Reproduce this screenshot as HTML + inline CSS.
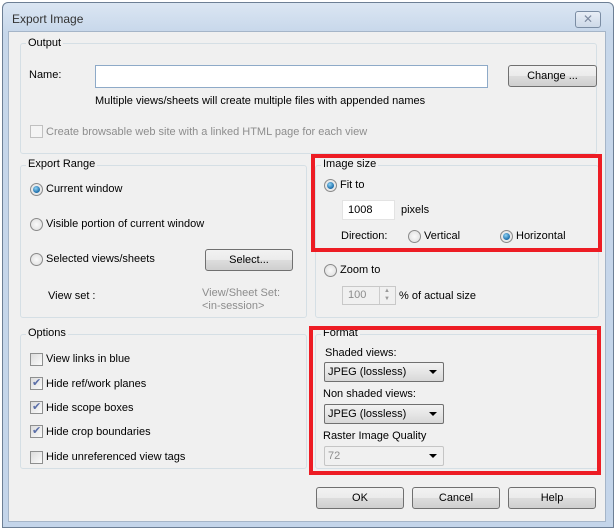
<!DOCTYPE html>
<html><head><meta charset="utf-8"><style>
*{box-sizing:border-box;margin:0;padding:0}
body{width:614px;height:528px;background:#fff;position:relative;overflow:hidden;font-family:"Liberation Sans",sans-serif;font-size:11px;color:#000}
.a{position:absolute;white-space:nowrap}
.win{position:absolute;left:2px;top:2px;width:612px;height:526px;background:linear-gradient(#dbe6f3,#c7d7ea 30px,#c4d5ea);border:1px solid #6d7f95;border-radius:6px 6px 0 0}
.client{position:absolute;left:8px;top:31px;width:598px;height:491px;background:#f0f0f0;border:1px solid #a5b5c8}
.grp{position:absolute;border:1px solid #d5dfe5;border-radius:3px}
.lbl{position:absolute;background:#f0f0f0;padding:0 2px}
.btn{position:absolute;border:1px solid #707070;border-radius:3px;background:linear-gradient(#f2f2f2,#ebebeb 50%,#dddddd 51%,#cfcfcf);text-align:center;line-height:20px}
.inp{position:absolute;background:#fff;border:1px solid #abadb3}
.rad{position:absolute;width:13px;height:13px;border-radius:50%;border:1px solid #8a8a8a;background:radial-gradient(#fafafa,#dcdcdc)}
.rad.on::after{content:"";position:absolute;left:2px;top:2px;width:7px;height:7px;border-radius:50%;background:radial-gradient(circle at 40% 35%,#8fd3f5,#1a6ba8 70%)}
.chk{position:absolute;width:13px;height:13px;border:1px solid #8e8f8f;background:linear-gradient(135deg,#dcdcdc,#fbfbfb)}
.chk.on::after{content:"✔";position:absolute;left:1px;top:-2px;font-size:11px;color:#5a6ea8}
.sel{position:absolute;border:1px solid #707070;border-radius:2px;background:linear-gradient(#f2f2f2,#e6e6e6 50%,#d8d8d8);padding-left:3px;line-height:18px}
.sel::after{content:"";position:absolute;right:6px;top:7px;border-left:4px solid transparent;border-right:4px solid transparent;border-top:4px solid #000}
.red{position:absolute;border:4px solid #ed1c24}
.gray{color:#8d8d8d}
</style></head><body>
<div class="win"></div>
<div class="a" style="left:12px;top:12px;font-size:12px;color:#333">Export Image</div>
<div class="a" style="left:575px;top:11px;width:26px;height:17px;border:1px solid #7b8da4;border-radius:3px;background:linear-gradient(#e8eef6,#cdd9e8);text-align:center;font-size:12px;line-height:15px;color:#7d8aa0">✕</div>
<div class="client"></div>

<div class="grp" style="left:20px;top:43px;width:577px;height:111px"></div>
<div class="lbl" style="left:26px;top:37px">Output</div>
<div class="a" style="left:29px;top:69px">Name:</div>
<div class="inp" style="left:95px;top:65px;width:393px;height:23px;border-color:#8eaac8"></div>
<div class="btn" style="left:508px;top:65px;width:89px;height:22px">Change ...</div>
<div class="a" style="left:95px;top:95px">Multiple views/sheets will create multiple files with appended names</div>
<div class="chk" style="left:30px;top:125px;border-color:#c0c0c0;background:#f4f4f4"></div>
<div class="a gray" style="left:46px;top:126px">Create browsable web site with a linked HTML page for each view</div>

<div class="grp" style="left:20px;top:165px;width:287px;height:153px"></div>
<div class="lbl" style="left:26px;top:158px">Export Range</div>
<div class="rad on" style="left:30px;top:183px"></div>
<div class="a" style="left:46px;top:183px">Current window</div>
<div class="rad" style="left:30px;top:218px"></div>
<div class="a" style="left:46px;top:218px">Visible portion of current window</div>
<div class="rad" style="left:30px;top:253px"></div>
<div class="a" style="left:46px;top:253px">Selected views/sheets</div>
<div class="btn" style="left:205px;top:249px;width:88px;height:22px">Select...</div>
<div class="a" style="left:48px;top:290px">View set :</div>
<div class="a gray" style="left:202px;top:287px;line-height:13px">View/Sheet Set:<br>&lt;in-session&gt;</div>

<div class="grp" style="left:315px;top:165px;width:284px;height:153px"></div>
<div class="lbl" style="left:321px;top:158px">Image size</div>
<div class="rad on" style="left:324px;top:179px"></div>
<div class="a" style="left:340px;top:179px">Fit to</div>
<div class="inp" style="left:342px;top:200px;width:53px;height:20px;border-color:#e3e3e3"></div>
<div class="a" style="left:348px;top:204px">1008</div>
<div class="a" style="left:401px;top:204px">pixels</div>
<div class="a" style="left:341px;top:230px">Direction:</div>
<div class="rad" style="left:408px;top:230px"></div>
<div class="a" style="left:424px;top:230px">Vertical</div>
<div class="rad on" style="left:500px;top:230px"></div>
<div class="a" style="left:516px;top:230px">Horizontal</div>
<div class="red" style="left:311px;top:154px;width:291px;height:98px"></div>
<div class="rad" style="left:324px;top:264px"></div>
<div class="a" style="left:340px;top:264px">Zoom to</div>
<div class="inp" style="left:342px;top:286px;width:54px;height:19px;border-color:#c8c8c8;background:#f0f0f0"></div>
<div class="a gray" style="left:348px;top:289px">100</div>
<div class="a" style="left:379px;top:287px;width:15px;height:17px;border-left:1px solid #ccc;font-size:6px;color:#999;line-height:8px;text-align:center">▲<br>▼</div>
<div class="a" style="left:399px;top:290px">% of actual size</div>

<div class="grp" style="left:20px;top:334px;width:287px;height:135px"></div>
<div class="lbl" style="left:26px;top:327px">Options</div>
<div class="chk" style="left:30px;top:353px"></div>
<div class="a" style="left:46px;top:353px">View links in blue</div>
<div class="chk on" style="left:30px;top:377px"></div>
<div class="a" style="left:46px;top:378px">Hide ref/work planes</div>
<div class="chk on" style="left:30px;top:401px"></div>
<div class="a" style="left:46px;top:402px">Hide scope boxes</div>
<div class="chk on" style="left:30px;top:425px"></div>
<div class="a" style="left:46px;top:426px">Hide crop boundaries</div>
<div class="chk" style="left:30px;top:451px"></div>
<div class="a" style="left:46px;top:451px">Hide unreferenced view tags</div>

<div class="grp" style="left:315px;top:334px;width:284px;height:135px"></div>
<div class="lbl" style="left:321px;top:327px">Format</div>
<div class="a" style="left:325px;top:347px">Shaded views:</div>
<div class="sel" style="left:324px;top:362px;width:120px;height:20px">JPEG (lossless)</div>
<div class="a" style="left:323px;top:388px">Non shaded views:</div>
<div class="sel" style="left:324px;top:404px;width:120px;height:20px">JPEG (lossless)</div>
<div class="a" style="left:323px;top:430px">Raster Image Quality</div>
<div class="sel gray" style="left:324px;top:446px;width:120px;height:20px;border-color:#c5c5c5;background:#f0f0f0;border-radius:2px">72</div>
<div class="red" style="left:309px;top:326px;width:292px;height:149px"></div>

<div class="btn" style="left:316px;top:487px;width:88px;height:22px">OK</div>
<div class="btn" style="left:412px;top:487px;width:88px;height:22px">Cancel</div>
<div class="btn" style="left:508px;top:487px;width:88px;height:22px">Help</div>
</body></html>
